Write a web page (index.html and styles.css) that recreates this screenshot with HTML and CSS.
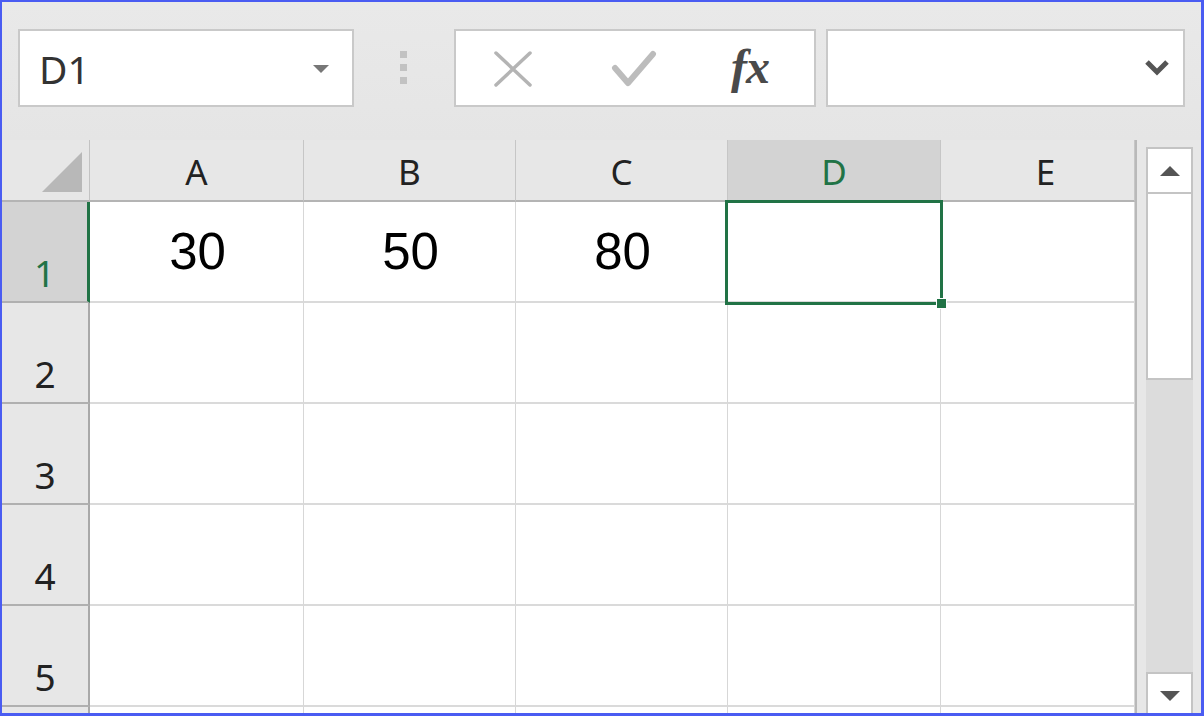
FILE: index.html
```html
<!DOCTYPE html>
<html>
<head>
<meta charset="utf-8">
<link rel="stylesheet" href="styles.css">
</head>
<body>
<div class="frame">
  <div class="toolbar">
    <div class="namebox">
      <span class="nametext">D1</span>
      <svg class="ddarrow" width="18" height="10" viewBox="0 0 18 10"><path d="M1 1 L17 1 L9 9 Z" fill="#777"/></svg>
    </div>
    <div class="grip"><i></i><i></i><i></i></div>
    <div class="fxbox">
      <svg class="ico-x" width="42" height="40" viewBox="0 0 42 40"><path d="M4 4 L38 36 M38 4 L4 36" stroke="#b4b4b4" stroke-width="3.5" stroke-linecap="round" fill="none"/></svg>
      <svg class="ico-check" width="48" height="42" viewBox="0 0 48 42"><path d="M5 20 L18 35 L43 6" stroke="#bcbcbc" stroke-width="6" stroke-linecap="round" stroke-linejoin="round" fill="none"/></svg>
      <span class="fx">fx</span>
    </div>
    <div class="formula">
      <svg class="chev" width="26" height="18" viewBox="0 0 26 18"><path d="M3 3 L13 13 L23 3" stroke="#555" stroke-width="5" fill="none" stroke-linejoin="miter"/></svg>
    </div>
  </div>
  <div class="sheet">
    <div class="grid">
      <div class="corner"><svg width="40" height="40" viewBox="0 0 40 40"><path d="M40 0 L40 40 L0 40 Z" fill="#b8b8b8"/></svg></div>
      <div class="ch">A</div>
      <div class="ch">B</div>
      <div class="ch">C</div>
      <div class="ch sel">D</div>
      <div class="ch last">E</div>

      <div class="rh sel">1</div>
      <div class="c">30</div>
      <div class="c">50</div>
      <div class="c">80</div>
      <div class="c"></div>
      <div class="c"></div>

      <div class="rh">2</div>
      <div class="c"></div><div class="c"></div><div class="c"></div><div class="c"></div><div class="c"></div>

      <div class="rh">3</div>
      <div class="c"></div><div class="c"></div><div class="c"></div><div class="c"></div><div class="c"></div>

      <div class="rh">4</div>
      <div class="c"></div><div class="c"></div><div class="c"></div><div class="c"></div><div class="c"></div>

      <div class="rh">5</div>
      <div class="c"></div><div class="c"></div><div class="c"></div><div class="c"></div><div class="c"></div>

      <div class="rh"></div>
      <div class="c"></div><div class="c"></div><div class="c"></div><div class="c"></div><div class="c"></div>

      <div class="selection"><span class="handle"></span></div>
    </div>
    <div class="vscroll">
      <div class="sbtn up"><svg width="22" height="12" viewBox="0 0 22 12"><path d="M1 11 L21 11 L11 1 Z" fill="#555"/></svg></div>
      <div class="thumb"></div>
      <div class="trough"></div>
      <div class="sbtn down"><svg width="22" height="12" viewBox="0 0 22 12"><path d="M1 1 L21 1 L11 11 Z" fill="#555"/></svg></div>
    </div>
  </div>
</div>
</body>
</html>
```

FILE: styles.css
```css
* { box-sizing: border-box; }
html, body { margin: 0; padding: 0; }
body { width: 1204px; height: 716px; overflow: hidden; background: #e6e6e6; }

.frame {
  width: 1204px;
  height: 716px;
  border-style: solid;
  border-color: #4a5cf2;
  border-width: 2px 3px 3px 2px;
  background: #e7e7e7;
  display: flex;
  flex-direction: column;
  overflow: hidden;
}

.toolbar {
  height: 138px;
  flex: none;
  display: flex;
  align-items: flex-start;
  padding: 27px 16px 0 16px;
  background: linear-gradient(#e9e9e9, #e5e5e5);
}

.namebox, .fxbox, .formula {
  height: 78px;
  background: #fff;
  border: 2px solid #c9c9c9;
  display: flex;
  align-items: center;
}

.namebox {
  width: 336px;
  padding: 0 22px 0 19px;
  justify-content: space-between;
}
.nametext {
  font-family: "Noto Sans", "Open Sans", sans-serif;
  font-size: 39px;
  color: #333;
  line-height: 1;
}
.ddarrow { margin-top: 2px; }

.grip {
  width: 8px;
  margin: 22px 46px 0 46px;
  display: flex;
  flex-direction: column;
  gap: 6px;
}
.grip i {
  display: block;
  width: 7px;
  height: 7px;
  background: #c2c2c2;
}

.fxbox {
  width: 362px;
  padding: 0 0 0 36px;
}
.ico-x { margin-right: 76px; margin-top: 1px; }
.ico-check { margin-right: 73px; margin-top: 2px; }
.fx {
  font-family: "Liberation Serif", "DejaVu Serif", serif;
  font-style: italic;
  font-weight: bold;
  font-size: 48px;
  color: #4a4a4a;
  line-height: 1;
  letter-spacing: -1px;
  margin-top: -2px;
}

.formula {
  width: 359px;
  margin-left: 10px;
  justify-content: flex-end;
  padding-right: 13px;
}

.sheet {
  flex: 1;
  display: flex;
  align-items: stretch;
}

.grid {
  position: relative;
  display: grid;
  grid-template-columns: 88px 214px 212px 212px 213px 194px;
  grid-template-rows: 62px repeat(5, 101px) 12px;
  background: #fff;
  align-self: flex-start;
  border-right: 2px solid #b9b9b9;
}

.corner {
  background: #e7e7e7;
  border-right: 1px solid #c3c3c3;
  border-bottom: 2px solid #b4b4b4;
  display: flex;
  align-items: flex-end;
  justify-content: flex-end;
  padding: 0 7px 8px 0;
}

.ch {
  background: #e7e7e7;
  border-right: 1px solid #c6c6c6;
  border-bottom: 2px solid #b4b4b4;
  display: flex;
  align-items: center;
  justify-content: center;
  padding-top: 3px;
  font-family: "Noto Sans", "Open Sans", sans-serif;
  font-size: 35px;
  color: #222;
}
.ch.last { padding-left: 16px; }
.ch.sel {
  background: #d3d3d3;
  color: #217346;
}

.rh {
  background: #e7e7e7;
  border-right: 2px solid #a9a9a9;
  border-bottom: 2px solid #b0b0b0;
  display: flex;
  align-items: flex-end;
  justify-content: center;
  padding-bottom: 10px;
  font-family: "Noto Sans", "Open Sans", sans-serif;
  font-size: 37px;
  line-height: 1;
  color: #222;
}
.rh.sel {
  background: #d3d3d3;
  color: #217346;
  border-right: 3px solid #217346;
}

.c {
  border-right: 1px solid #d7d7d7;
  border-bottom: 2px solid #dadada;
  display: flex;
  align-items: center;
  justify-content: center;
  font-family: "Liberation Sans", Arial, sans-serif;
  font-size: 51px;
  color: #000;
  padding-left: 2px;
}

.selection {
  position: absolute;
  left: 723px;
  top: 60px;
  width: 218px;
  height: 105px;
  border: 3px solid #217346;
  pointer-events: none;
}
.handle {
  position: absolute;
  right: -7px;
  bottom: -7px;
  width: 11px;
  height: 11px;
  background: #217346;
  border: 1px solid #fff;
}

.vscroll {
  width: 66px;
  padding: 7px 8px 0 9px;
  display: flex;
  flex-direction: column;
  background: #e7e7e7;
}
.sbtn {
  height: 47px;
  flex: none;
  background: #fff;
  border: 2px solid #c4c4c4;
  display: flex;
  align-items: center;
  justify-content: center;
}
.thumb {
  height: 186px;
  flex: none;
  background: #fff;
  border: 2px solid #c4c4c4;
  border-top: none;
}
.trough {
  flex: 1;
  background: #dcdcdc;
}
```
